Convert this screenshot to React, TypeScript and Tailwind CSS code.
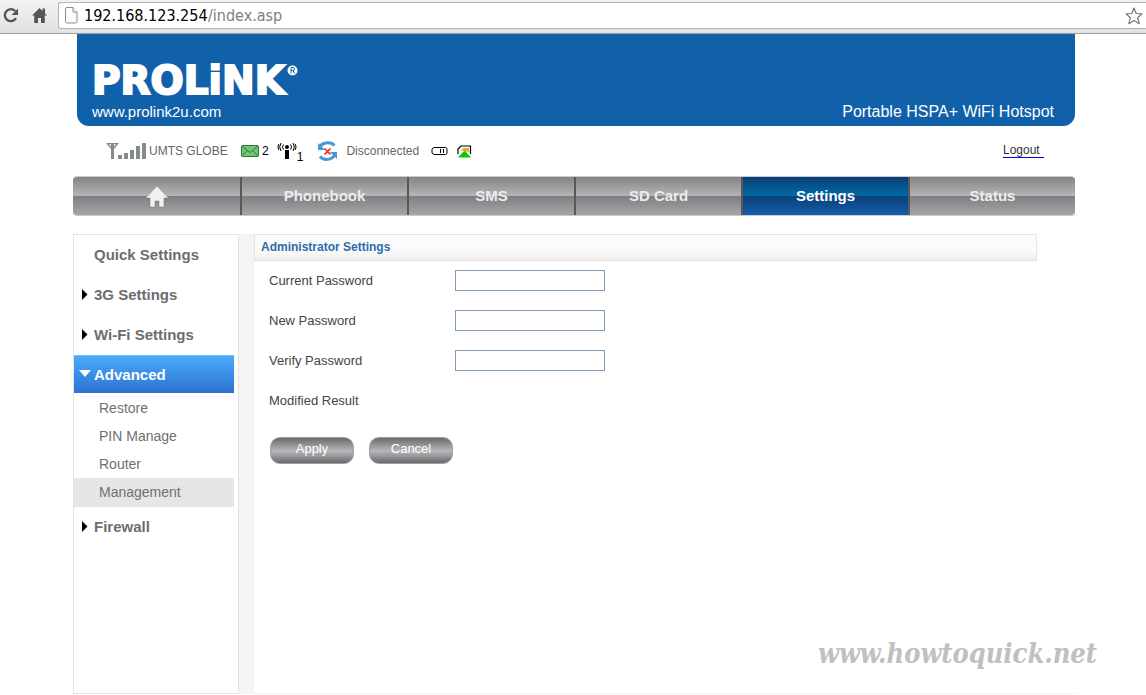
import { FormEvent, useState } from "react";
import clsx from "clsx";

const tabs = ["Home", "Phonebook", "SMS", "SD Card", "Settings", "Status"];

const advancedItems = ["Restore", "PIN Manage", "Router", "Management"];

const fields = [
  { id: "current", label: "Current Password" },
  { id: "new", label: "New Password" },
  { id: "verify", label: "Verify Password" }
];

const BrowserBar = () => (
  <div className="flex h-[34px] items-center border-b border-[#9d9d9f] bg-linear-to-b from-[#f4f3f4] to-[#e2e1e2] pb-0.5">
    <button type="button" aria-label="Reload" className="ml-[3px]">
      <svg width="17" height="17" viewBox="0 0 17 17" fill="none">
        <path d="M13 11.2A6 6 0 1 1 12.2 4" stroke="#555" strokeWidth="2.4" />
        <path d="M15 1.5V8H8.6Z" fill="#555" />
      </svg>
    </button>
    <button type="button" aria-label="Home page" className="ml-[11px]">
      <svg width="17" height="17" viewBox="0 0 17 17" fill="#555">
        <path d="M8.5 1 1 8.6h2.2V16H7v-5h3v5h3.8V8.6H16L14 6.5v-5h-2.500v2.600Z" />
      </svg>
    </button>
    <div className="ml-[10px] flex h-[27px] flex-1 items-center rounded-l-[3px] border border-r-0 border-[#b3b3b5] bg-white pr-[3px] pl-1.5">
      <svg width="13" height="17" viewBox="0 0 13 17" fill="#fbfbfb" stroke="#8b8b8b">
        <path d="M.5 2q0-1.500 1.500-1.500h6l4 4.500v9.500q0 1.500-1.500 1.500H2Q.5 16 .5 14.500Z" />
        <path d="M8 .5V5h4" />
      </svg>
      <input
        aria-label="Address"
        readOnly
        value="192.168.123.254"
        className="ml-1.5 w-[124px] bg-transparent font-['DejaVu_Sans_Condensed','DejaVu_Sans',sans-serif] text-base text-black outline-none"
      />
      <span className="flex-1 font-['DejaVu_Sans_Condensed','DejaVu_Sans',sans-serif] text-base text-[#808080]">
        /index.asp
      </span>
      <button type="button" aria-label="Bookmark this page">
        <svg width="18" height="18" viewBox="0 0 18 18" fill="none" stroke="#777" strokeWidth="1.2" strokeLinejoin="round">
          <path d="m9 1 2.200 5.500 5.800.4-4.400 3.800 1.600 6L9 13.400 3.800 16.700l1.600-6L1 6.900l5.800-.4Z" />
        </svg>
      </button>
    </div>
  </div>
);

const Banner = () => (
  <header className="ml-1 flex h-[92px] items-end justify-between rounded-b-xl bg-[#1160aa] pr-[21px] pb-[5px] pl-[15px] text-white">
    <div>
      <div className="mb-1 flex items-start">
        <span className="font-['DejaVu_Sans',sans-serif] text-[39px] leading-9 font-bold [-webkit-text-stroke:2px_white]">
          PROLiNK
        </span>
        <svg className="mt-0.5 ml-0.5" width="11" height="11" viewBox="0 0 11 11">
          <circle cx="5.5" cy="5.5" r="5" fill="#fff" />
          <path d="M4 8.500v-6h2q1.500 0 1.500 1.500T6 5.500H4m2 0 1.500 3" stroke="#1160aa" fill="none" />
        </svg>
      </div>
      <a href="http://www.prolink2u.com" className="block text-[15px] leading-[18px]">
        www.prolink2u.com
      </a>
    </div>
    <p className="text-base leading-[18px]">Portable HSPA+ WiFi Hotspot</p>
  </header>
);

const StatusBar = () => (
  <div className="flex h-[50px] items-center pr-[31px] pl-[33px] text-xs text-[#666]">
    <svg width="41" height="18" viewBox="0 0 41 18" fill="#858a8c">
      <path d="M0 1h13L8 7v10H5V7Zm2.800 1.200L5 4.600V2.200Zm5.200 0v2.400l2.200-2.400Z" fillRule="evenodd" />
      <path d="M12 13h4v4h-4zM18 11h4v6h-4zM24 8h4v9h-4zM30 4h4v13h-4zM36 1h4v16h-4z" />
    </svg>
    <span className="ml-0.5 w-[92px]">UMTS GLOBE</span>
    <svg width="18" height="12" viewBox="0 0 18 12" fill="#75c476" stroke="#2a7a33">
      <rect x=".5" y=".5" width="17" height="11" rx="1" />
      <path d="m1 1 8 6.500L17 1M1 11l5.500-5.500M17 11l-5.500-5.500" fill="none" />
    </svg>
    <span className="ml-[3px] text-black">2</span>
    <svg className="ml-2" width="20" height="18" viewBox="0 0 20 18" fill="none" stroke="#000">
      <circle cx="10" cy="5" r="2" fill="#000" stroke="none" />
      <path d="M8 8h4v9H8z" fill="#000" stroke="none" />
      <path d="M6.500 2.500Q4.500 5 6.500 7.500M4 1Q1.300 5 4 9M1.800 2Q0 5 1.800 8M13.500 2.500q2 2.500 0 5M16 1q2.700 4 0 8M18.200 2q1.800 3 0 6" />
    </svg>
    <span className="self-end pb-[11px] text-black">1</span>
    <svg className="ml-3.5" width="21" height="20" viewBox="0 0 21 20" fill="none">
      <path d="M3 5.500C6 1 14 .5 17.500 4.500M17.500 14.500C14 19.500 6 19.500 3 15.500" stroke="#4398d8" strokeWidth="3" />
      <path d="M1 2v7h7ZM20 18v-7h-7Z" fill="#4398d8" />
      <path d="m7.500 7.500 6 6m0-6-6 6" stroke="#f02020" strokeWidth="1.6" />
    </svg>
    <span className="ml-2 w-[85px]">Disconnected</span>
    <svg width="17" height="8" viewBox="0 0 17 8" fill="none" stroke="#000">
      <path d="M3 .5h11.500l1.500 1v5l-1.500 1H3l-2-1.500V2Z" />
      <path d="M9.500 2v4M12.500 2v4" />
    </svg>
    <svg className="ml-[9px]" width="15" height="13" viewBox="0 0 15 13" fill="none">
      <path d="M1 9V4l3-3h9.500v8" stroke="#000" strokeWidth="1.2" />
      <path d="M4 5.500 6.500 3H12v4Z" fill="#f6a22c" />
      <path d="m7.500 5.500 6.500 7H1Z" fill="#0c0" />
    </svg>
    <a href="#logout" className="ml-auto w-[41px] border-b border-[#00e] text-xs leading-[13px] text-[#333]">
      Logout
    </a>
  </div>
);

const Tabs = () => (
  <nav className="grid h-10 grid-cols-6 overflow-hidden rounded-[4px] border-y border-[#cacacc]">
    {tabs.map((tab) => (
      <a
        key={tab}
        href={`#${tab}`}
        aria-label={tab}
        className={clsx(
          "flex items-center justify-center border-l-2 border-[#58585a] text-[15px] font-bold first:border-l-0",
          tab === "Settings"
            ? "bg-[linear-gradient(#0b3d75,#006ca5_50%,#0b3f78_50%,#155dab)] text-white"
            : "bg-[linear-gradient(#848487,#b5b5b8_50%,#7e7e81_50%,#a6a6aa)] text-[#ececec]"
        )}
      >
        {tab === "Home" ? (
          <svg width="24" height="23" viewBox="0 0 24 23" fill="#f0f0f0" stroke="#77777a" strokeWidth=".5">
            <path d="M12 1 .5 13H5v9h5v-6h4v6h5v-9h4.500Z" />
          </svg>
        ) : (
          tab
        )}
      </a>
    ))}
  </nav>
);

const MenuItem = ({ label, arrow = true }: { label: string; arrow?: boolean }) => (
  <a href={`#${label}`} className="flex h-10 items-center pl-2 text-[15px] font-bold text-[#6d6d6d]">
    <svg width="12" height="12" viewBox="0 0 12 12">
      {arrow && <path d="M0 0v11l5.500-5.500Z" />}
    </svg>
    {label}
  </a>
);

const Sidebar = () => (
  <aside className="w-[166px] shrink-0 border border-[#e4e4e4] bg-white pr-1">
    <MenuItem label="Quick Settings" arrow={false} />
    <MenuItem label="3G Settings" />
    <MenuItem label="Wi-Fi Settings" />
    <a
      href="#Advanced"
      className="flex h-[38px] items-center border-t border-[#7cbdf5] bg-linear-to-b from-[#4aabfb] to-[#2d72d0] pt-px pl-[5px] text-[15px] font-bold text-white"
    >
      <svg width="15" height="10" viewBox="0 0 15 10" fill="#fff">
        <path d="M0 0h12L6 7Z" />
      </svg>
      Advanced
    </a>
    <ul className="border-b border-dotted border-[#d0d0d0] pt-px text-sm text-[#707070]">
      {advancedItems.map((item) => (
        <li key={item}>
          <a
            href={`#${item}`}
            className={clsx("flex h-7 items-center pl-[25px]", item === "Management" && "bg-[#e6e6e6]")}
          >
            {item}
          </a>
        </li>
      ))}
    </ul>
    <MenuItem label="Firewall" />
  </aside>
);

const actionButton =
  "h-[27px] w-[84px] rounded-[10px] border border-[#a0a0a3] bg-[linear-gradient(#6b6b6d,#b7b7bb_52%,#6b6b6d)] pb-[3px] text-[13px] text-white";

const PasswordForm = () => {
  const [values, setValues] = useState<Record<string, string>>({});

  const handleSubmit = (e: FormEvent) => {
    e.preventDefault();
  };

  return (
    <form onSubmit={handleSubmit} onReset={() => setValues({})} className="pl-[15px] text-[13px] text-[#444]">
      {fields.map(({ id, label }) => (
        <div key={id} className="flex h-10 items-center pb-px">
          <label htmlFor={id} className="w-[186px]">
            {label}
          </label>
          <input
            id={id}
            type="password"
            value={values[id] ?? ""}
            onChange={(e) => setValues({ ...values, [id]: e.target.value })}
            className="h-[21px] w-[150px] border border-[#7f9db9] bg-white px-1"
          />
        </div>
      ))}
      <p className="flex h-10 items-center">Modified Result</p>
      <div className="mt-4 ml-px flex gap-[15px]">
        <button type="submit" className={actionButton}>
          Apply
        </button>
        <button type="reset" className={actionButton}>
          Cancel
        </button>
      </div>
    </form>
  );
};

export default function App() {
  return (
    <div className="relative bg-white font-['Liberation_Sans',Arial,sans-serif]">
      <BrowserBar />
      <div className="pl-0.5">
        <div className="mx-auto max-w-[1002px]">
          <Banner />
          <StatusBar />
          <Tabs />
          <div className="mt-[18px] -mr-[3px] flex min-h-[460px] bg-[#f4f4f4]">
            <Sidebar />
            <main className="mb-px ml-[15px] flex-1 bg-white">
              <h1 className="mr-[41px] h-[27px] border border-[#e4e4e4] bg-linear-to-b from-[#fbfbfb] from-60% to-[#eee] pl-1.5 text-xs leading-[25px] font-bold text-[#2c6ca8]">
                Administrator Settings
              </h1>
              <PasswordForm />
            </main>
          </div>
        </div>
      </div>
      <p className="absolute right-[49px] bottom-6 font-['DejaVu_Serif_Condensed','DejaVu_Serif',serif] text-[27px] leading-8 font-bold text-[#c0c0c0] italic">
        www.howtoquick.net
      </p>
    </div>
  );
}
